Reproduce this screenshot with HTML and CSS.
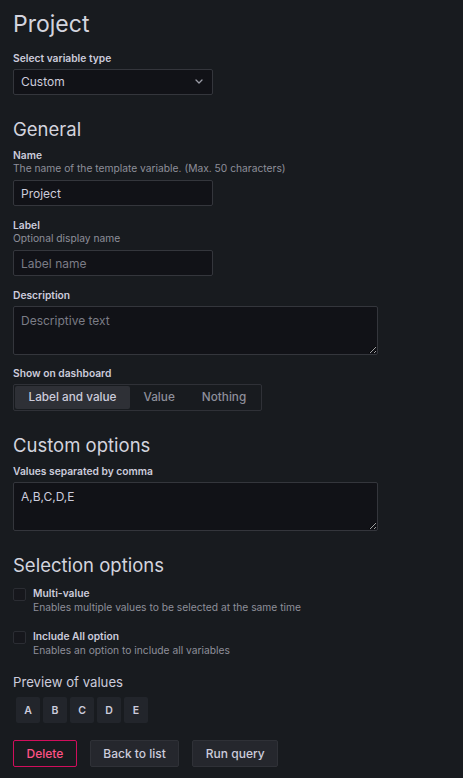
FILE: index.html
```html
<!DOCTYPE html>
<html lang="en">
<head>
<meta charset="utf-8">
<title>Project</title>
<link rel="stylesheet" href="styles.css">
</head>
<body>
<div class="page">
  <h1 class="title">Project</h1>

  <label class="lbl m-type">Select variable type</label>
  <div class="select m-4">
    <span>Custom</span>
    <svg class="chev" width="8" height="5" viewBox="0 0 8 5"><path d="M1 1l3 3 3-3" fill="none" stroke="#9a9ba5" stroke-width="1.3" stroke-linecap="round" stroke-linejoin="round"/></svg>
  </div>

  <h2 class="section m-general">General</h2>

  <label class="lbl m-name">Name</label>
  <div class="desc">The name of the template variable. (Max. 50 characters)</div>
  <input class="input m-5" type="text" value="Project">

  <label class="lbl m-13">Label</label>
  <div class="desc">Optional display name</div>
  <input class="input m-5" type="text" placeholder="Label name">

  <label class="lbl m-13">Description</label>
  <textarea class="textarea m-desc" placeholder="Descriptive text"></textarea>

  <label class="lbl m-show">Show on dashboard</label>
  <div class="radio m-radio">
    <span class="seg active">Label and value</span>
    <span class="seg">Value</span>
    <span class="seg">Nothing</span>
  </div>

  <h2 class="section m-custom">Custom options</h2>
  <label class="lbl m-values">Values separated by comma</label>
  <textarea class="textarea m-vals">A,B,C,D,E</textarea>

  <h2 class="section m-custom">Selection options</h2>

  <div class="check m-cb1">
    <span class="box"></span>
    <div class="check-text">
      <div class="check-label">Multi-value</div>
      <div class="check-desc">Enables multiple values to be selected at the same time</div>
    </div>
  </div>
  <div class="check m-cb2">
    <span class="box"></span>
    <div class="check-text">
      <div class="check-label">Include All option</div>
      <div class="check-desc">Enables an option to include all variables</div>
    </div>
  </div>

  <div class="preview-title m-preview">Preview of values</div>
  <div class="chips m-chips">
    <span class="chip">A</span>
    <span class="chip">B</span>
    <span class="chip">C</span>
    <span class="chip">D</span>
    <span class="chip">E</span>
  </div>

  <div class="actions m-actions">
    <button class="btn btn-danger">Delete</button>
    <button class="btn btn-secondary">Back to list</button>
    <button class="btn btn-secondary">Run query</button>
  </div>
</div>
</body>
</html>
```
FILE: styles.css
```css
html, body {
  margin: 0;
  padding: 0;
  background: #181b1f;
  color: #ccccdc;
  font-family: Inter, "Noto Sans", "Liberation Sans", sans-serif;
}

.page {
  display: flex;
  flex-direction: column;
  align-items: flex-start;
  padding: 10px 13px 0 13px;
  height: 778px;
  box-sizing: border-box;
}

.title {
  margin: 0;
  font-size: 23px;
  line-height: 29px;
  font-weight: 400;
  color: #d3d4de;
}

.section {
  margin: 0;
  font-size: 18.5px;
  line-height: 22px;
  font-weight: 400;
  color: #d3d4de;
}

.lbl {
  display: block;
  font-size: 10.25px;
  line-height: 13px;
  font-weight: 600;
  color: #ccccdc;
}

.desc {
  font-size: 10.25px;
  line-height: 13px;
  color: #8e8f9a;
}

.select, .input {
  box-sizing: border-box;
  width: 200px;
  height: 26px;
  background: #111217;
  border: 1px solid #34363c;
  border-radius: 2px;
  color: #ccccdc;
  font-family: inherit;
  font-size: 12px;
}

.select {
  display: flex;
  align-items: center;
  justify-content: space-between;
  padding: 0 9px 0 7px;
}

.chev { display: block; }

.input {
  padding: 0 7px;
  outline: none;
}

.input::placeholder, .textarea::placeholder {
  color: #7b7c86;
}

.textarea {
  box-sizing: border-box;
  width: 365px;
  height: 49px;
  background: #111217;
  border: 1px solid #34363c;
  border-radius: 2px;
  color: #ccccdc;
  font-family: inherit;
  font-size: 12px;
  line-height: 19px;
  padding: 4.5px 7px;
  resize: vertical;
  color-scheme: dark;
  outline: none;
}

.radio {
  box-sizing: border-box;
  display: flex;
  height: 27px;
  padding: 1px;
  border: 1px solid #2f3137;
  border-radius: 2px;
}

.seg {
  display: flex;
  align-items: center;
  padding: 0 13.5px;
  font-size: 11.75px;
  font-weight: 500;
  color: #8e8f9a;
  border-radius: 2px;
}

.seg.active {
  background: #2e3036;
  color: #ccccdc;
}

.check {
  display: flex;
  gap: 7px;
}

.box {
  box-sizing: border-box;
  width: 13px;
  height: 13px;
  margin-top: 2px;
  background: #16171c;
  border: 1px solid #2b2d33;
  border-radius: 2px;
  flex: none;
}

.check-label {
  font-size: 10.25px;
  line-height: 14px;
  font-weight: 600;
  color: #ccccdc;
}

.check-desc {
  font-size: 10.25px;
  line-height: 14.5px;
  color: #8e8f9a;
}

.preview-title {
  font-size: 13.2px;
  line-height: 16px;
  color: #ccccdc;
}

.chips {
  display: flex;
  gap: 3px;
  padding-left: 3px;
}

.chip {
  display: flex;
  align-items: center;
  justify-content: center;
  width: 24px;
  height: 26px;
  background: #22252b;
  border-radius: 2px;
  font-size: 10.5px;
  font-weight: 600;
  color: #ccccdc;
}

.actions {
  display: flex;
  gap: 13px;
}

.btn {
  box-sizing: border-box;
  height: 27px;
  padding: 0 12.5px;
  font-family: inherit;
  font-size: 12px;
  font-weight: 500;
  border-radius: 2px;
  cursor: pointer;
}

.btn-danger {
  background: transparent;
  border: 1px solid #d10e5c;
  color: #ff5286;
}

.btn-secondary {
  background: #25272d;
  border: 1px solid #2f3137;
  color: #ccccdc;
}

/* vertical rhythm */
.m-type { margin-top: 12.5px; }
.m-4 { margin-top: 4px; }
.m-5 { margin-top: 5px; }
.m-13 { margin-top: 13px; }
.m-general { margin-top: 23.8px; }
.m-name { margin-top: 9.2px; }
.m-desc { margin-top: 3.5px; }
.m-show { margin-top: 11.8px; }
.m-radio { margin-top: 4.2px; }
.m-custom { margin-top: 23.3px; }
.m-values { margin-top: 8.9px; }
.m-vals { margin-top: 3.8px; }
.m-cb1 { margin-top: 10px; }
.m-cb2 { margin-top: 14.2px; }
.m-preview { margin-top: 16.5px; }
.m-chips { margin-top: 7.5px; }
.m-actions { margin-top: 17px; }
```
